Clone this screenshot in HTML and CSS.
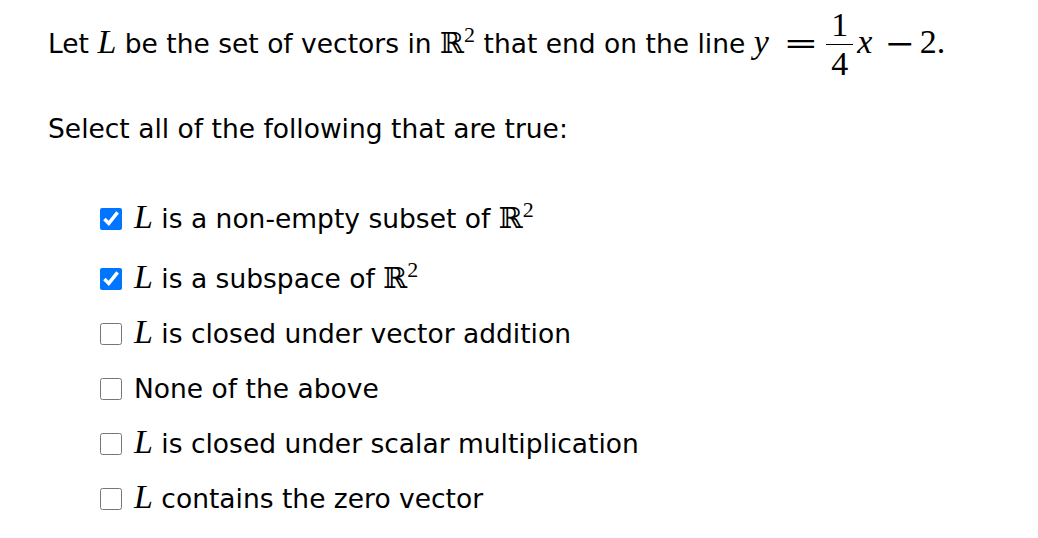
FILE: index.html
```html
<!DOCTYPE html>
<html>
<head>
  <title>Question</title>
  <meta name="viewport" content="width=device-width, initial-scale=1.0">
  <link rel="stylesheet" href="styles.css">
</head>
<body>
  <div class="question">
    <p class="prompt">
      Let <span class="mi">L</span> be the set of vectors in <span class="bb">ℝ<sup>2</sup></span> that end on the line
      <span class="math"><span class="mi">y</span><span class="mo eq">=</span><span class="frac"><span class="num">1</span><span class="den">4</span></span><span class="mi">x</span><span class="mo minus">−</span><span class="mn">2.</span></span>
    </p>

    <p class="instr">Select all of the following that are true:</p>

    <ul class="choices">
      <li><label><input type="checkbox" checked><span><span class="mi">L</span> is a non-empty subset of <span class="bb">ℝ<sup>2</sup></span></span></label></li>
      <li><label><input type="checkbox" checked><span><span class="mi">L</span> is a subspace of <span class="bb">ℝ<sup>2</sup></span></span></label></li>
      <li><label><input type="checkbox"><span><span class="mi">L</span> is closed under vector addition</span></label></li>
      <li><label><input type="checkbox"><span>None of the above</span></label></li>
      <li><label><input type="checkbox"><span><span class="mi">L</span> is closed under scalar multiplication</span></label></li>
      <li><label><input type="checkbox"><span><span class="mi">L</span> contains the zero vector</span></label></li>
    </ul>
  </div>
</body>
</html>
```

FILE: styles.css
```css
* {
  margin: 0;
  padding: 0;
  box-sizing: border-box;
}

body {
  font-family: 'DejaVu Sans', 'Noto Sans', sans-serif;
  font-size: 26.5px;
  color: #000;
  background: #fff;
}

.question {
  padding: 8px 48px;
}

/* math bits */
.mi {
  font-family: 'Liberation Serif', 'DejaVu Serif', serif;
  font-style: italic;
  font-size: 34px;
  line-height: 0;
}

.mn {
  font-family: 'Liberation Serif', 'DejaVu Serif', serif;
  font-size: 34px;
}

/* operators are drawn a bit wider than the font gives them */
.mo {
  display: inline-block;
  font-family: 'DejaVu Sans', sans-serif;
  font-size: 28px;
  line-height: 0;
}

.mo.eq {
  transform: scaleX(1.5);
  margin: 0 14px 0 20px;
}

.mo.minus {
  transform: scaleX(1.3);
  margin: 0 8px 0 16px;
}

.bb {
  font-family: 'DejaVu Serif', serif;
  font-size: 29px;
  line-height: 0;
}

.bb sup {
  font-family: 'Liberation Serif', serif;
  font-size: 22px;
  line-height: 0;
}

.frac {
  display: inline-flex;
  flex-direction: column;
  align-items: center;
  vertical-align: 17px;
  font-family: 'Liberation Serif', serif;
  font-size: 34px;
  line-height: 1;
  margin: 0 4px 0 0;
}

.frac .num {
  border-bottom: 1.5px solid #000;
  padding: 0 5px 2px;
}

.frac .den {
  padding-top: 2px;
}

.prompt {
  line-height: 48px;
}

.instr {
  margin-top: 32px;
}

.choices {
  list-style: none;
  margin-top: 54px;
  padding-left: 52px;
  display: flex;
  flex-direction: column;
  gap: 14px;
}

.choices li:first-child {
  margin-bottom: 5px;
}

.choices label {
  display: flex;
  align-items: center;
  gap: 12px;
  height: 41px;
  line-height: 41px;
}

.choices input {
  width: 22px;
  height: 22px;
  margin: 0;
  flex: none;
}
```
